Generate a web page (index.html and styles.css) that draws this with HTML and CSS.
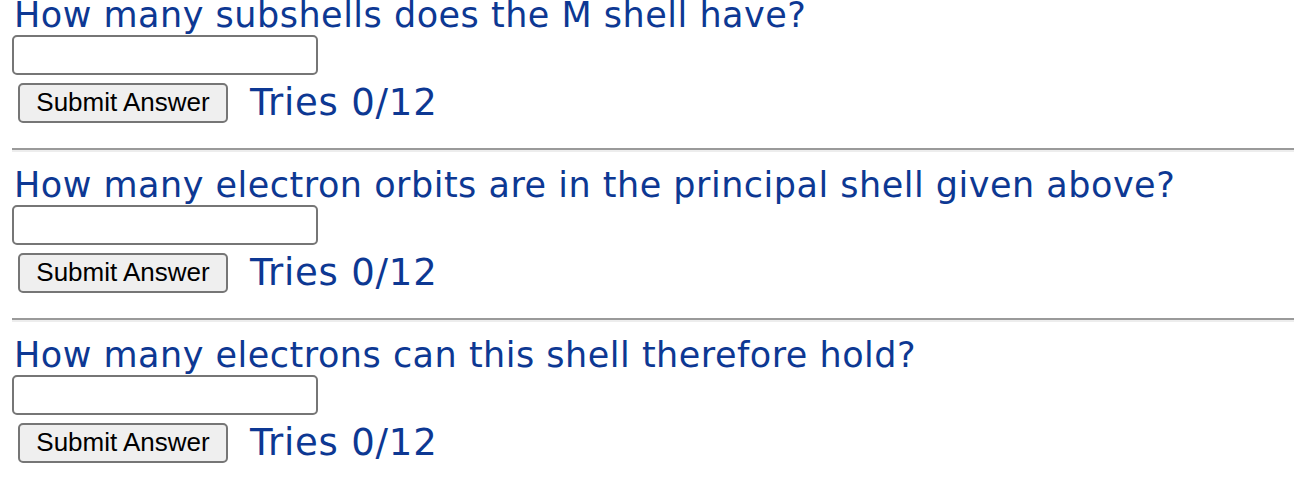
FILE: index.html
```html
<!DOCTYPE html>
<html lang="en">
<head>
<meta charset="utf-8">
<title>Shell questions</title>
<link rel="stylesheet" href="styles.css">
</head>
<body>
<main class="quiz">
  <section class="item">
    <div class="question">How many subshells does the M shell have?</div>
    <input class="answer" type="text">
    <div class="row">
      <button class="submit" type="button">Submit Answer</button>
      <span class="tries">Tries 0/12</span>
    </div>
    <hr class="divider">
  </section>
  <section class="item">
    <div class="question">How many electron orbits are in the principal shell given above?</div>
    <input class="answer" type="text">
    <div class="row">
      <button class="submit" type="button">Submit Answer</button>
      <span class="tries">Tries 0/12</span>
    </div>
    <hr class="divider">
  </section>
  <section class="item">
    <div class="question">How many electrons can this shell therefore hold?</div>
    <input class="answer" type="text">
    <div class="row">
      <button class="submit" type="button">Submit Answer</button>
      <span class="tries">Tries 0/12</span>
    </div>
  </section>
</main>
</body>
</html>
```

FILE: styles.css
```css
html, body {
  margin: 0;
  padding: 0;
  background: #ffffff;
}

.quiz {
  margin-top: -4px;
  padding-left: 12px;
  font-family: "DejaVu Sans", Verdana, sans-serif;
  color: #0d3893;
}

.item {
  display: flex;
  flex-direction: column;
  align-items: flex-start;
}

.question {
  font-size: 35px;
  line-height: 39px;
  height: 39px;
  letter-spacing: 0.5px;
  white-space: nowrap;
  padding-left: 2px;
}

.answer {
  box-sizing: border-box;
  width: 306px;
  height: 40px;
  margin: 0;
  border: 2px solid #767676;
  border-radius: 5px;
  background: #ffffff;
  font-size: 26px;
}

.row {
  display: flex;
  align-items: center;
  margin-top: 8px;
  height: 40px;
}

.submit {
  box-sizing: border-box;
  width: 210px;
  height: 40px;
  margin: 0 0 0 6px;
  padding: 0 0 2px 0;
  border: 2px solid #767676;
  border-radius: 5px;
  background: #efefef;
  color: #000000;
  font-family: "Liberation Sans", Arial, sans-serif;
  font-size: 26px;
}

.tries {
  margin-left: 22px;
  font-size: 37px;
  line-height: 40px;
  letter-spacing: 0.8px;
}

.divider {
  align-self: stretch;
  box-sizing: border-box;
  height: 4px;
  margin: 25px 0 14px 0;
  border: 0;
  border-top: 2px solid #9a9a9a;
  border-bottom: 2px solid #ededed;
}
```
